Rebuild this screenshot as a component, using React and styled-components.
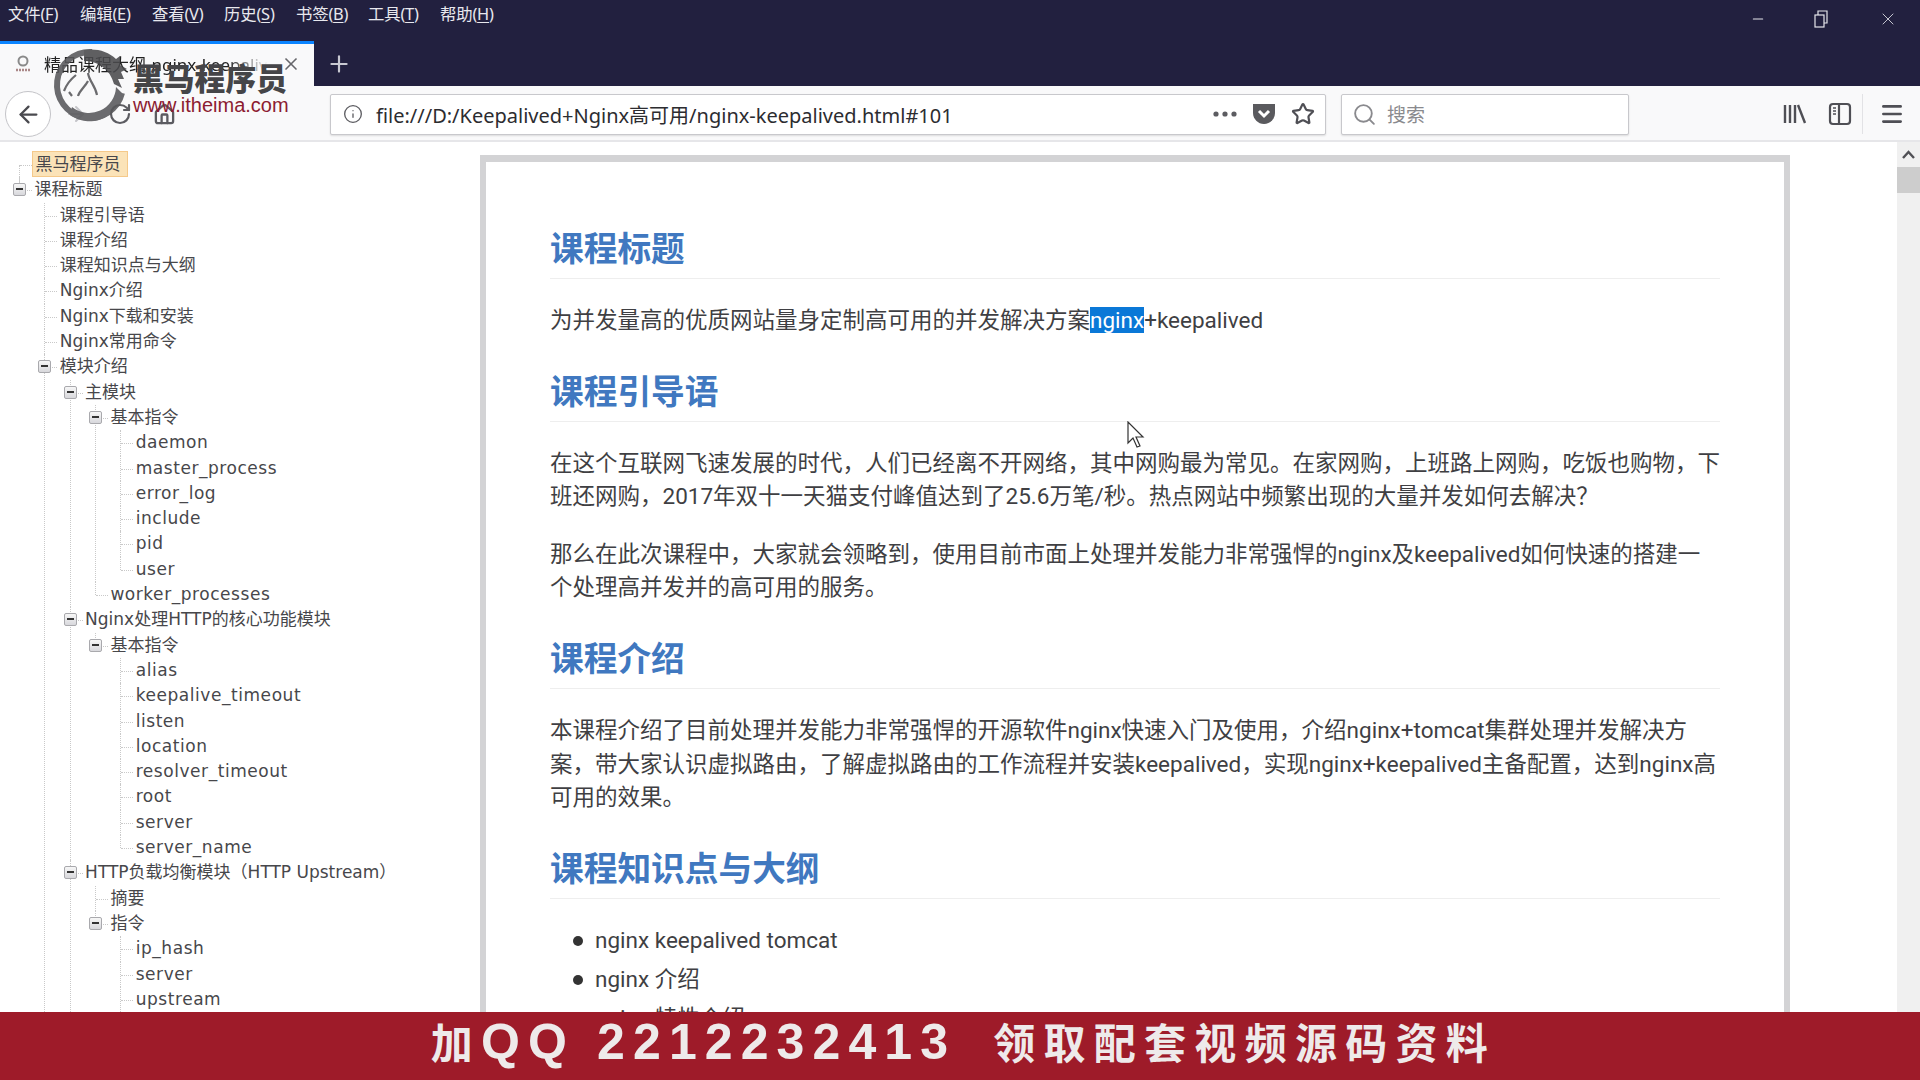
import React from "react";
import styled, { createGlobalStyle } from "styled-components";
import {
  ArrowLeft,
  ArrowRight,
  RotateCw,
  House,
  Info,
  Star,
  Search,
  X,
  Plus,
  Minus,
  Menu,
} from "lucide-react";

const CJK = `"Noto Sans", "Noto Sans CJK SC", sans-serif`;
const ROW = 25.3;

const GlobalStyle = createGlobalStyle`
  html, body {
    margin: 0;
    padding: 0;
    width: 1920px;
    height: 1080px;
    overflow: hidden;
    background: #fff;
    font-family: ${CJK};
  }
`;

const Page = styled.div`
  position: relative;
  width: 1920px;
  height: 1080px;
  display: flex;
  flex-direction: column;
  overflow: hidden;
`;

const Chrome = styled.div`
  background: #22203f;
  height: 86px;
  flex: none;
  display: flex;
  flex-direction: column;
`;

const MenuRow = styled.div`
  height: 41px;
  display: flex;
  align-items: flex-start;
  justify-content: space-between;
  color: #e8e8ee;
`;

const MenuList = styled.div`
  display: flex;
  gap: 17px;
  padding: 2px 0 0 8px;
`;

const MenuItem = styled.span`
  width: 55px;
  white-space: nowrap;
  font-size: 16.4px;
  line-height: 24px;
  letter-spacing: -0.2px;
  u { text-underline-offset: 2px; }
`;

const WindowButtons = styled.div`
  display: flex;
  align-items: center;
  gap: 48px;
  padding: 9px 22px 0 0;
  color: #e6e6ec;
`;

const TabRow = styled.div`
  height: 45px;
  display: flex;
`;

const Tab = styled.div`
  width: 314px;
  box-sizing: border-box;
  border-top: 3px solid #0a84ff;
  background: #f9f9fa;
  display: flex;
  align-items: center;
  padding: 0 13px 3px 15px;
  gap: 13px;
  color: #222;
  font-size: 17px;
`;

const TabTitle = styled.span`
  flex: 1;
  overflow: hidden;
  white-space: nowrap;
  mask-image: linear-gradient(to right, #000 82%, transparent);
`;

const NewTab = styled.div`
  width: 50px;
  display: flex;
  align-items: center;
  justify-content: center;
  color: #c9c9d2;
`;

const Toolbar = styled.div`
  height: 56px;
  flex: none;
  box-sizing: border-box;
  background: #f9f9fa;
  border-bottom: 2px solid #e6e6e9;
  display: flex;
  align-items: center;
  padding: 2px 0 0 5px;
  color: #4a4a4f;
`;

const BackButton = styled.div`
  width: 46px;
  height: 46px;
  margin-right: 3px;
  box-sizing: border-box;
  border: 1px solid #c4c4c8;
  border-radius: 50%;
  background: #fff;
  display: flex;
  align-items: center;
  justify-content: center;
  flex: none;
`;

const NavButton = styled.div`
  width: 44px;
  display: flex;
  justify-content: center;
  color: ${(p) => (p.$muted ? "#c4c4c8" : "#5c5c61")};
  flex: none;
`;

const UrlBar = styled.div`
  margin-left: 144px;
  width: 996px;
  height: 41px;
  box-sizing: border-box;
  background: #fff;
  border: 1px solid #c8c8cc;
  border-radius: 2px;
  box-shadow: 0 1px 2px rgba(0, 0, 0, 0.12);
  display: flex;
  align-items: center;
  padding: 0 10px 0 12px;
  flex: none;
`;

const UrlText = styled.span`
  margin-left: 13px;
  flex: 1;
  font-size: 20px;
  color: #2c2c30;
  white-space: nowrap;
`;

const UrlIcons = styled.div`
  display: flex;
  align-items: center;
  gap: 15px;
`;

const SearchBox = styled.div`
  margin-left: 15px;
  width: 288px;
  height: 41px;
  box-sizing: border-box;
  background: #fff;
  border: 1px solid #c8c8cc;
  border-radius: 2px;
  box-shadow: 0 1px 2px rgba(0, 0, 0, 0.12);
  display: flex;
  align-items: center;
  gap: 10px;
  padding: 0 10px;
  color: #8a8a8e;
  font-size: 19px;
  flex: none;
`;

const ToolIcons = styled.div`
  margin-left: auto;
  display: flex;
  align-items: center;
  height: 40px;
  color: #4f4f55;
`;

const ToolIcon = styled.div`
  width: 45px;
  display: flex;
  justify-content: center;
`;

const MenuButton = styled.div`
  width: 57px;
  height: 40px;
  border-left: 1px solid #e2e2e5;
  display: flex;
  align-items: center;
  justify-content: center;
`;

const Main = styled.div`
  height: 870px;
  flex: none;
  display: flex;
  overflow: hidden;
`;

const Sidebar = styled.nav`
  width: 480px;
  flex: none;
  overflow: hidden;
  padding-top: 10px;
  box-sizing: border-box;
  color: #47474b;
  font-family: "DejaVu Sans", "Noto Sans CJK SC", sans-serif;
  font-size: 17px;
`;

const RootLabel = styled.span`
  display: inline-block;
  margin: -2px 0 0 -3px;
  padding: 0 6px 0 3px;
  line-height: 24px;
  background: #fbe3b8;
  border: 1px solid #f5c98a;
`;

const Row = styled.div`
  position: relative;
  height: ${ROW}px;
  line-height: ${ROW}px;
  white-space: nowrap;
  padding-left: ${(p) => 34.5 + p.$level * ROW}px;
  &::before {
    content: "";
    position: absolute;
    left: ${(p) => 20 + p.$level * ROW}px;
    width: 12px;
    top: 13px;
    border-top: 1px dotted #c9c9c9;
  }
`;

const RootRow = styled(Row)`
  &::after {
    content: "";
    position: absolute;
    left: 19px;
    top: 13px;
    height: 20px;
    border-left: 1px dotted #c9c9c9;
  }
`;

const RowLabel = styled.span`
  letter-spacing: ${(p) => (p.$ascii ? "0.55px" : "0")};
`;

const Node = styled.div`
  position: relative;
  &::before {
    content: "";
    position: absolute;
    left: ${(p) => 19 + p.$level * ROW}px;
    top: 0;
    ${(p) => (p.$end ? "height: 13px;" : "bottom: 0;")}
    border-left: 1px dotted #c9c9c9;
  }
`;

const Expander = styled.span`
  position: absolute;
  left: ${(p) => 13 + p.$level * ROW}px;
  top: 6px;
  width: 13px;
  height: 13px;
  box-sizing: border-box;
  border: 1px solid #a9a9ad;
  border-radius: 2px;
  background: linear-gradient(#f7f7f7, #d8d8dc);
  z-index: 1;
  &::after {
    content: "";
    position: absolute;
    left: 2px;
    right: 2px;
    top: 4px;
    height: 2px;
    background: #333;
  }
`;

const Frame = styled.article`
  width: 1310px;
  height: 960px;
  flex: none;
  margin-top: 13px;
  box-sizing: border-box;
  border: solid #d3d3d5;
  border-width: 7px 6px;
  padding: 33px 64px 0;
  color: #3f3f43;
  font-family: Roboto, "Noto Sans CJK SC", sans-serif;
  font-size: 22.5px;
  line-height: 33.6px;
`;

const Heading = styled.h2`
  margin: 35px 0 25px;
  padding-bottom: 8px;
  border-bottom: 1px solid #eeeeee;
  font-size: 33.7px;
  line-height: 40px;
  font-weight: 700;
  color: #4078c0;
`;

const Para = styled.p`
  margin: 0 0 24px;
  white-space: nowrap;
`;

const Selected = styled.span`
  background: #0a78d7;
  color: #fff;
`;

const List = styled.ul`
  margin: 0;
  padding: 0 0 0 45px;
  list-style: none;
`;

const ListItem = styled.li`
  position: relative;
  margin-bottom: 5.6px;
  &::before {
    content: "";
    position: absolute;
    left: -22px;
    top: 12px;
    width: 10px;
    height: 10px;
    border-radius: 50%;
    background: #333;
  }
`;

const PageScroll = styled.div`
  margin-left: auto;
  width: 23px;
  flex: none;
  background: #f0f0f0;
  display: flex;
  flex-direction: column;
  align-items: center;
  color: #505055;
`;

const ScrollArrow = styled.div`
  height: 25px;
  display: flex;
  align-items: center;
  justify-content: center;
`;

const ScrollArrowDown = styled.div`
  margin-top: auto;
  height: 5px;
  overflow: hidden;
`;

const ScrollThumb = styled.div`
  width: 100%;
  height: 26px;
  background: #cdcdcd;
`;

const Banner = styled.div`
  height: 68px;
  flex: none;
  box-sizing: border-box;
  padding: 0 0 12px 7px;
  background: #9e1b29;
  display: flex;
  align-items: center;
  justify-content: center;
  gap: 37px;
  color: #eeeaea;
  font-family: "Liberation Sans", "Noto Sans CJK SC", sans-serif;
  font-weight: 700;
  font-size: 50px;
  white-space: nowrap;
`;

const BannerLead = styled.span`
  letter-spacing: 8.1px;
`;

const BannerTail = styled.span`
  font-size: 42px;
  letter-spacing: 8.3px;
`;

const Watermark = styled.div`
  position: absolute;
  left: 50px;
  top: 47px;
  display: flex;
  gap: 3px;
  pointer-events: none;
`;

const BrandText = styled.div`
  display: flex;
  flex-direction: column;
  padding-top: 13px;
`;

const BrandName = styled.span`
  font-family: "Noto Sans CJK SC", sans-serif;
  font-weight: 900;
  font-size: 30.8px;
  line-height: 33px;
  color: #454548;
`;

const BrandUrl = styled.span`
  font-family: "Liberation Sans", sans-serif;
  font-size: 20px;
  line-height: 24px;
  color: #8c1c31;
`;

const Cursor = styled.svg`
  position: absolute;
  left: 1127px;
  top: 421px;
`;

const leaves = (...names) => names.map((label) => ({ label }));

const tree = [
  {
    label: "课程标题",
    children: [
      { label: "课程引导语" },
      { label: "课程介绍" },
      { label: "课程知识点与大纲" },
      { label: "Nginx介绍" },
      { label: "Nginx下载和安装" },
      { label: "Nginx常用命令" },
      {
        label: "模块介绍",
        more: true,
        children: [
          {
            label: "主模块",
            children: [
              {
                label: "基本指令",
                children: leaves("daemon", "master_process", "error_log", "include", "pid", "user"),
              },
              { label: "worker_processes" },
            ],
          },
          {
            label: "Nginx处理HTTP的核心功能模块",
            children: [
              {
                label: "基本指令",
                children: leaves("alias", "keepalive_timeout", "listen", "location", "resolver_timeout", "root", "server", "server_name"),
              },
            ],
          },
          {
            label: "HTTP负载均衡模块（HTTP Upstream）",
            more: true,
            children: [
              { label: "摘要" },
              {
                label: "指令",
                children: [...leaves("ip_hash", "server"), { label: "upstream", more: true }],
              },
            ],
          },
        ],
      },
    ],
  },
];

const isAscii = (text) => /^[a-z_]+$/i.test(text);

const TreeNodes = ({ nodes, level }) =>
  nodes.map((node, i) => (
    <Node key={node.label + i} $level={level} $end={i === nodes.length - 1 && !node.more}>
      <Row $level={level}>
        {node.children && <Expander $level={level} />}
        <RowLabel $ascii={isAscii(node.label)}>{node.label}</RowLabel>
      </Row>
      {node.children && <TreeNodes nodes={node.children} level={level + 1} />}
    </Node>
  ));

const RestoreIcon = () => (
  <svg width="16" height="18" viewBox="0 0 16 18" fill="none" stroke="currentColor" strokeWidth="1.2">
    <rect x="1" y="5" width="9" height="12" />
    <path d="M4 5V1h9v12h-3" />
  </svg>
);

const PocketIcon = () => (
  <svg width="24" height="22" viewBox="0 0 24 22">
    <path d="M1 1h22v9c0 6-5 11-11 11S1 16 1 10z" fill="#5a5a5e" />
    <path d="M7 8l5 5 5-5" fill="none" stroke="#fff" strokeWidth="3" />
  </svg>
);

const LibraryIcon = () => (
  <svg width="24" height="24" viewBox="0 0 24 24" fill="none" stroke="currentColor" strokeWidth="2.4">
    <path d="M2 3v18M7 3v18M12 3v18M15 3l7 18" />
  </svg>
);

const SidebarIcon = () => (
  <svg width="24" height="24" viewBox="0 0 24 24" fill="none" stroke="currentColor" strokeWidth="2.2">
    <rect x="2" y="2" width="20" height="20" rx="3" />
    <path d="M11 2v20" />
    <path d="M5 6h3M5 9h3M5 12h3" strokeWidth="1.4" />
  </svg>
);

const Favicon = () => (
  <svg width="16" height="18" viewBox="0 0 16 18" fill="none">
    <circle cx="8" cy="6" r="4.5" stroke="#8a8a8a" strokeWidth="2" />
    <path d="M1 15h14" stroke="#a88" strokeWidth="2.4" strokeDasharray="2 1" />
  </svg>
);

const HorseLogo = () => (
  <svg width="80" height="76" viewBox="0 0 80 76" fill="none" style={{ opacity: 0.88 }}>
    <path d="M42 5 A33 33 0 1 0 72 46" stroke="#58585b" strokeWidth="6" />
    <path d="M20 68 A33 33 0 0 0 72 46 L66 40 A27 27 0 0 1 22 60z" fill="#58585b" />
    <path
      d="M34 3 C46 1 58 4 66 12 L70 9 L70 18 L77 22 L71 25 L74 32 L68 32 L72 41 L64 37 C60 22 48 14 34 14z"
      fill="#4a4a4d"
    />
    <path d="M14 44c3-8 7-12 12-16M22 49l-3-4M38 26c1 8 7 12 9 22M38 34c-3 6-8 9-10 15" stroke="#58585b" strokeWidth="2.2" />
  </svg>
);

const App = () => (
  <Page>
    <GlobalStyle />
    <Chrome>
      <MenuRow>
        <MenuList>
          <MenuItem>文件(<u>F</u>)</MenuItem>
          <MenuItem>编辑(<u>E</u>)</MenuItem>
          <MenuItem>查看(<u>V</u>)</MenuItem>
          <MenuItem>历史(<u>S</u>)</MenuItem>
          <MenuItem>书签(<u>B</u>)</MenuItem>
          <MenuItem>工具(<u>T</u>)</MenuItem>
          <MenuItem>帮助(<u>H</u>)</MenuItem>
        </MenuList>
        <WindowButtons>
          <Minus size={16} strokeWidth={1.6} />
          <RestoreIcon />
          <X size={20} strokeWidth={1} />
        </WindowButtons>
      </MenuRow>
      <TabRow>
        <Tab>
          <Favicon />
          <TabTitle>精品课程大纲-nginx-keepalived</TabTitle>
          <X size={20} strokeWidth={2} color="#66666a" />
        </Tab>
        <NewTab>
          <Plus size={26} strokeWidth={2} />
        </NewTab>
      </TabRow>
    </Chrome>
    <Toolbar>
      <BackButton>
        <ArrowLeft size={27} strokeWidth={2} />
      </BackButton>
      <NavButton $muted>
        <ArrowRight size={24} strokeWidth={2} />
      </NavButton>
      <NavButton>
        <RotateCw size={24} strokeWidth={2.2} />
      </NavButton>
      <NavButton>
        <House size={23} strokeWidth={2.4} />
      </NavButton>
      <UrlBar>
        <Info size={20} strokeWidth={1.6} color="#5c5c61" />
        <UrlText>file:///D:/Keepalived+Nginx高可用/nginx-keepalived.html#101</UrlText>
        <UrlIcons>
          <svg width="24" height="6" viewBox="0 0 24 6" fill="#5c5c61">
            <circle cx="3" cy="3" r="2.6" />
            <circle cx="12" cy="3" r="2.6" />
            <circle cx="21" cy="3" r="2.6" />
          </svg>
          <PocketIcon />
          <Star size={24} strokeWidth={2.2} color="#4f4f55" />
        </UrlIcons>
      </UrlBar>
      <SearchBox>
        <Search size={25} strokeWidth={1.8} />
        搜索
      </SearchBox>
      <ToolIcons>
        <ToolIcon>
          <LibraryIcon />
        </ToolIcon>
        <ToolIcon>
          <SidebarIcon />
        </ToolIcon>
        <MenuButton>
          <Menu size={26} strokeWidth={2.4} />
        </MenuButton>
      </ToolIcons>
    </Toolbar>
    <Main>
      <Sidebar>
        <RootRow $level={0}>
          <RootLabel>黑马程序员</RootLabel>
        </RootRow>
        <TreeNodes nodes={tree} level={0} />
      </Sidebar>
      <Frame>
        <Heading>课程标题</Heading>
        <Para>
          为并发量高的优质网站量身定制高可用的并发解决方案<Selected>nginx</Selected>+keepalived
        </Para>
        <Heading>课程引导语</Heading>
        <Para>
          在这个互联网飞速发展的时代，人们已经离不开网络，其中网购最为常见。在家网购，上班路上网购，吃饭也购物，下
          <br />
          班还网购，2017年双十一天猫支付峰值达到了25.6万笔/秒。热点网站中频繁出现的大量并发如何去解决？
        </Para>
        <Para>
          那么在此次课程中，大家就会领略到，使用目前市面上处理并发能力非常强悍的nginx及keepalived如何快速的搭建一
          <br />
          个处理高并发并的高可用的服务。
        </Para>
        <Heading>课程介绍</Heading>
        <Para>
          本课程介绍了目前处理并发能力非常强悍的开源软件nginx快速入门及使用，介绍nginx+tomcat集群处理并发解决方
          <br />
          案，带大家认识虚拟路由，了解虚拟路由的工作流程并安装keepalived，实现nginx+keepalived主备配置，达到nginx高
          <br />
          可用的效果。
        </Para>
        <Heading>课程知识点与大纲</Heading>
        <List>
          <ListItem>nginx keepalived tomcat</ListItem>
          <ListItem>nginx 介绍</ListItem>
          <ListItem>nginx 特性介绍</ListItem>
        </List>
      </Frame>
      <PageScroll>
        <ScrollArrow>
          <svg width="13" height="9" viewBox="0 0 13 9" fill="none" stroke="currentColor" strokeWidth="2.4">
            <path d="M1 8l5.5-6L12 8" />
          </svg>
        </ScrollArrow>
        <ScrollThumb />
        <ScrollArrowDown>
          <svg width="13" height="9" viewBox="0 0 13 9" fill="none" stroke="currentColor" strokeWidth="2.4">
            <path d="M1 1l5.5 6L12 1" />
          </svg>
        </ScrollArrowDown>
      </PageScroll>
    </Main>
    <Banner>
      <BannerLead>
        <BannerTail>加</BannerTail>QQ 2212232413
      </BannerLead>
      <BannerTail>领取配套视频源码资料</BannerTail>
    </Banner>
    <Watermark>
      <HorseLogo />
      <BrandText>
        <BrandName>黑马程序员</BrandName>
        <BrandUrl>www.itheima.com</BrandUrl>
      </BrandText>
    </Watermark>
    <Cursor width="18" height="27" viewBox="0 0 18 27">
      <path d="M1 1v21l5-5 4 9 3-1-4-9h7z" fill="#fff" stroke="#333" strokeWidth="1.2" />
    </Cursor>
  </Page>
);

export default App;
